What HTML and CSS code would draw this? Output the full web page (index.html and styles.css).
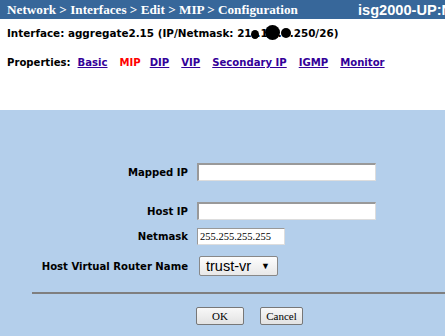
FILE: index.html
```html
<!DOCTYPE html>
<html>
<head>
<meta charset="utf-8">
<link rel="stylesheet" href="styles.css">
</head>
<body>
<div class="titlebar">
  <span class="crumbs">Network &gt; Interfaces &gt; Edit &gt; MIP &gt; Configuration</span>
  <span class="device">isg2000-UP:N</span>
</div>
<div class="info">Interface: aggregate2.15 (IP/Netmask: 21<span class="blob b1"></span>.1<span class="blob b2"></span>.<span class="blob b3"></span>.250/26)</div>
<div class="props">
  <span class="plabel">Properties:</span>
  <a class="plink" href="#">Basic</a>
  <span class="pcur">MIP</span>
  <a class="plink" href="#">DIP</a>
  <a class="plink" href="#">VIP</a>
  <a class="plink" href="#">Secondary IP</a>
  <a class="plink" href="#">IGMP</a>
  <a class="plink" href="#">Monitor</a>
</div>
<div class="panel">
  <div class="row r-mapped"><label class="lbl">Mapped IP</label><input class="txt wide" type="text"></div>
  <div class="row r-host"><label class="lbl">Host IP</label><input class="txt wide" type="text"></div>
  <div class="row r-mask"><label class="lbl">Netmask</label><input class="txt mask" type="text" value="255.255.255.255"></div>
  <div class="row r-vr"><label class="lbl">Host Virtual Router Name</label><div class="sel"><span>trust-vr</span><span class="arrow">&#9660;</span></div></div>
  <div class="rule"></div>
  <div class="buttons"><button class="btn ok">OK</button><button class="btn cancel">Cancel</button></div>
</div>
</body>
</html>
```
FILE: styles.css
```css
html, body { margin: 0; padding: 0; }
body { width: 445px; height: 336px; overflow: hidden; background: #fff; font-family: "DejaVu Sans", Verdana, sans-serif; }
.titlebar { height: 19px; background: #37679a; display: flex; align-items: center; white-space: nowrap; overflow: hidden; }
.crumbs { font-family: "Liberation Serif", "Times New Roman", serif; font-weight: bold; font-size: 13.2px; color: #fff; padding-left: 7px; width: 351px; flex: none; }
.device { font-family: "Liberation Sans", Arial, sans-serif; font-weight: bold; font-size: 14.6px; color: #fff; }
.info { font-size: 10.4px; font-weight: bold; padding: 8px 0 0 7px; height: 15px; white-space: nowrap; }
.blob { display: inline-block; background: #000; border-radius: 50%; vertical-align: middle; }
.b1 { width: 8px; height: 9px; margin: 0 -2px 0 -1px; }
.b2 { width: 15px; height: 15px; margin: -4px -2px 0 -3px; }
.b3 { width: 10px; height: 10px; margin: -2px -1px 0 -1px; }
.props { padding: 15px 0 0 7px; height: 18px; font-size: 10.1px; font-weight: bold; white-space: nowrap; display: flex; }
.plabel { margin-right: 7px; }
.plink { color: #330099; text-decoration: underline; margin-right: 12px; }
.pcur { color: #ff0000; margin-right: 9px; }
.panel { margin-top: 35px; background: #b4cfeb; height: 240px; padding-top: 53px; box-sizing: border-box; }
.row { display: flex; align-items: center; }
.lbl { width: 188px; text-align: right; font-size: 10.1px; font-weight: bold; padding-right: 9px; }
.txt { box-sizing: border-box; margin: 0; border: 1px solid #ddd; border-top: 2px solid #999; border-left: 2px solid #999; background: #fff; height: 18px; padding: 0 2px; }
.wide { width: 179px; }
.txt.mask { width: 88px; height: 17px; font-family: "Liberation Serif", "Times New Roman", serif; font-size: 10.5px; padding: 0 2px; border: 1px solid #ddd; border-top: 1px solid #999; border-left: 1px solid #999; }
.r-host { margin-top: 21px; }
.r-mask { margin-top: 8px; }
.r-vr { margin-top: 11px; }
.r-vr .lbl { padding-right: 11px; }
.sel { box-sizing: border-box; width: 79px; height: 20px; border: 1px solid #888; border-radius: 2px; background: linear-gradient(#fdfdfd, #e8e8e8); display: flex; align-items: center; justify-content: space-between; padding: 0 7px 0 6px; font-family: "Liberation Sans", Arial, sans-serif; font-size: 14.5px; }
.arrow { font-size: 9px; }
.rule { margin: 16px 0 0 32px; height: 2px; background: #7f7f7f; }
.buttons { display: flex; padding-left: 196px; margin-top: 13px; }
.btn { box-sizing: border-box; height: 18px; border: 1px solid #777; border-radius: 2px; background: linear-gradient(#f8f8f8, #e2e2e2); font-family: "Liberation Serif", serif; font-size: 11px; padding: 0; }
.ok { width: 48px; }
.cancel { width: 43px; margin-left: 16px; }
```
